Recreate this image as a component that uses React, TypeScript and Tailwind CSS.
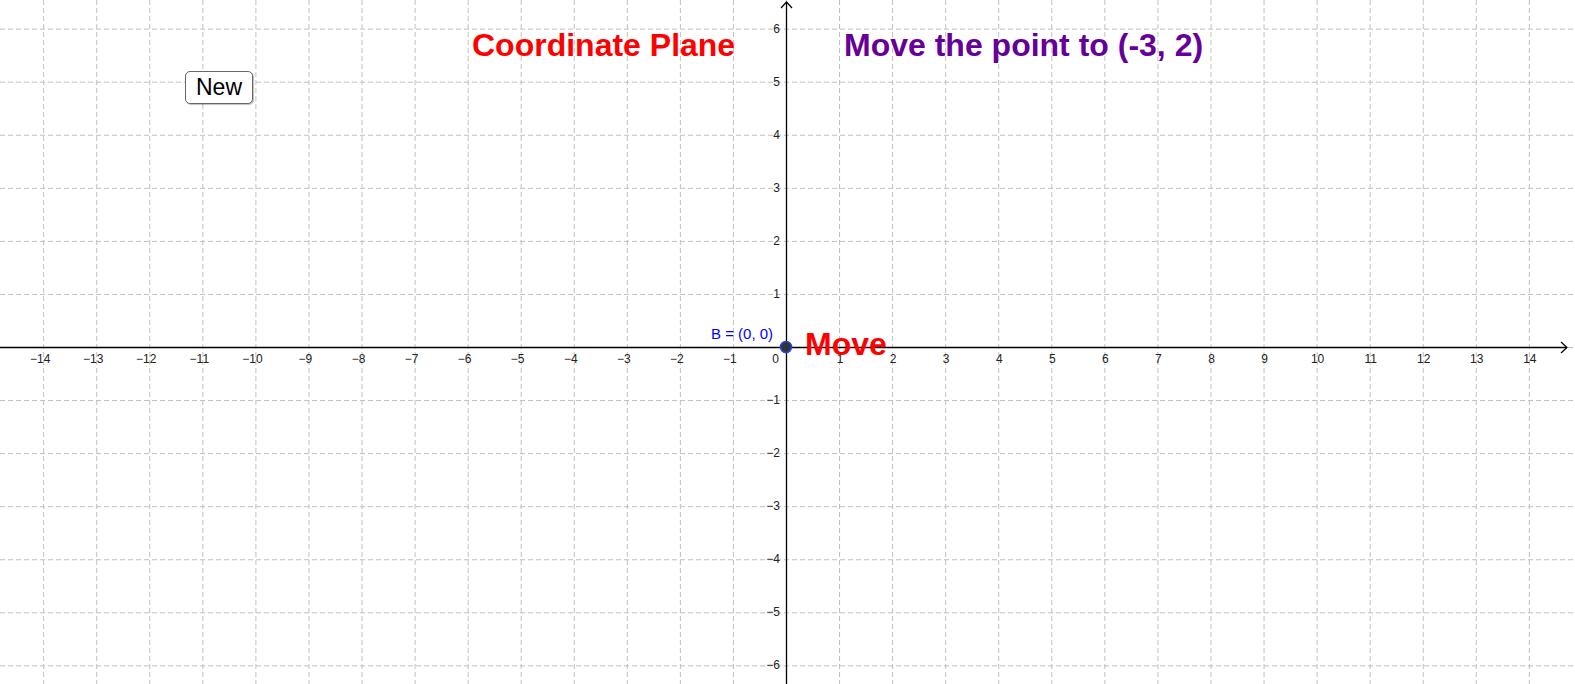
const W = 1575;
const H = 684;
const OX = 786;
const OY = 347;
const U = 53.06;

const xs = Array.from({ length: 29 }, (_, i) => i - 14);
const ys = Array.from({ length: 13 }, (_, i) => i - 6);

const fmt = (n: number) => (n < 0 ? `\u2212${Math.abs(n)}` : `${n}`);

function Plane() {
  return (
    <svg width={W} height={H} className="absolute inset-0 block" style={{ fontFamily: '"Liberation Sans", Arial, sans-serif' }}>
      {/* grid */}
      {xs.map((k) => (
        <line key={`gx${k}`} x1={OX + k * U + 0.5} y1={0} x2={OX + k * U + 0.5} y2={H} stroke="#c0c0c0" strokeDasharray="5 3" />
      ))}
      {ys.map((k) => (
        <line key={`gy${k}`} x1={0} y1={OY - k * U + 0.5} x2={W} y2={OY - k * U + 0.5} stroke="#c0c0c0" strokeDasharray="5 3" />
      ))}

      {/* axes */}
      <line x1={0} y1={OY + 0.5} x2={1567} y2={OY + 0.5} stroke="#000" strokeWidth={1.3} />
      <polyline points={`1561,${OY - 5} 1567,${OY + 0.5} 1561,${OY + 6}`} fill="none" stroke="#000" strokeWidth={1.2} />
      <line x1={OX + 0.5} y1={2} x2={OX + 0.5} y2={H} stroke="#000" strokeWidth={1.3} />
      <polyline points={`${OX - 5},8 ${OX + 0.5},2 ${OX + 6},8`} fill="none" stroke="#000" strokeWidth={1.2} />

      {/* tick labels */}
      {xs
        .filter((k) => k !== 0)
        .map((k) => (
          <text key={`lx${k}`} x={OX + k * U + (k < 0 ? -3 : 1)} y={OY + 16} fontSize={12} fill="#222" textAnchor="middle">
            {fmt(k)}
          </text>
        ))}
      {ys
        .filter((k) => k !== 0)
        .map((k) => (
          <text key={`ly${k}`} x={OX - 6} y={OY - k * U + 4} fontSize={12} fill="#222" textAnchor="end">
            {fmt(k)}
          </text>
        ))}
      <text x={OX - 7} y={OY + 16} fontSize={12} fill="#222" textAnchor="end">
        0
      </text>

      {/* point B */}
      <circle cx={OX} cy={OY} r={5.5} fill="#333" stroke="#2244dd" strokeWidth={1.6} />
    </svg>
  );
}

export default function App() {
  return (
    <div className="relative w-[1575px] h-[684px] overflow-hidden bg-white font-['Liberation_Sans',Arial,sans-serif]">
      <Plane />

      <div className="absolute left-[711px] top-[326px] text-[15px] leading-none text-[#0000ff]">B = (0, 0)</div>

      <div className="absolute left-[805px] top-[328px] text-[32px] font-bold leading-none text-[#ff0000]">Move</div>

      <div className="absolute left-[472px] top-[29px] text-[32px] font-bold leading-none text-[#ff0000]">Coordinate Plane</div>

      <div className="absolute left-[844px] top-[29px] text-[32px] font-bold leading-none text-[#660099]">Move the point to (-3, 2)</div>

      <button className="absolute left-[185px] top-[71px] flex h-[33px] w-[68px] items-center justify-center rounded-[5px] border border-[#666] bg-white text-[23px] leading-none text-black shadow-[1px_1px_1px_rgba(0,0,0,0.25)]">
        New
      </button>
    </div>
  );
}
